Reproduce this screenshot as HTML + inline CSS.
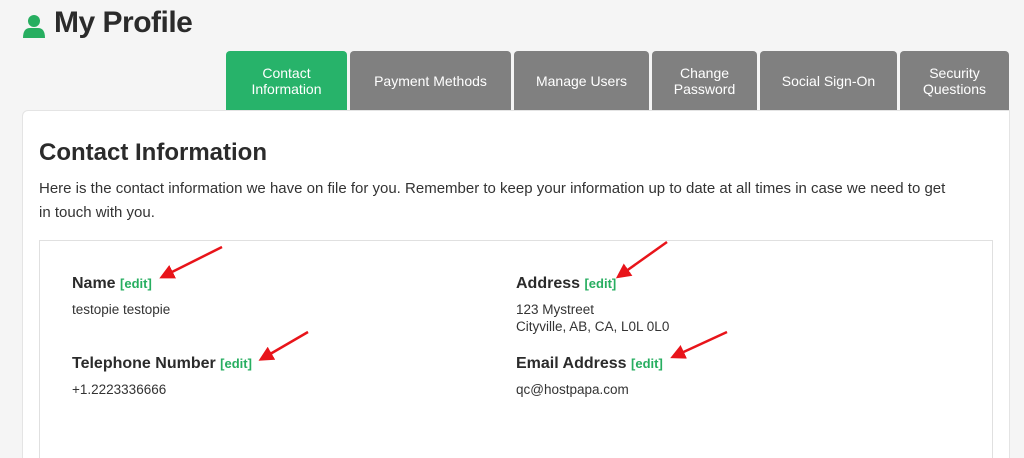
<!DOCTYPE html>
<html style="width:1024px;height:458px;overflow:hidden"><head><style>
body{margin:0;width:1024px;height:458px;background:#f5f5f5;font-family:"Liberation Sans",sans-serif;position:relative;overflow:hidden;color:#333}
h1{position:absolute;left:54px;top:6px;margin:0;font-size:30px;font-weight:bold;color:#2b2b2b;letter-spacing:-0.5px}
.tab{position:absolute;top:51px;height:59px;background:#808080;color:#fff;border-radius:4px 4px 0 0;display:flex;align-items:center;justify-content:center;text-align:center;font-size:14px;line-height:16px}
.panel{position:absolute;left:22px;top:110px;width:986px;height:348px;background:#fff;border-radius:6px 0 0 0;border:1px solid #e4e4e4;border-bottom:none}
h2{position:absolute;left:39px;top:139px;margin:0;font-size:24px;font-weight:bold;color:#2b2b2b}
.desc{position:absolute;left:39px;top:177px;width:980px;font-size:15px;line-height:24px;color:#333}
.box{position:absolute;left:39px;top:240px;width:952px;height:218px;border:1px solid #e0e0e0;border-bottom:none;background:#fff}
.lbl{position:absolute;font-size:16px;font-weight:bold;color:#2b2b2b}
.lbl span{font-size:13px;color:#27ae60;font-weight:bold}
.val{position:absolute;font-size:13.5px;line-height:17px;color:#333}
</style></head><body>
<svg style="position:absolute;left:22px;top:14px" width="24" height="26" viewBox="0 0 24 26"><circle cx="12" cy="7" r="6" fill="#27ae60"/><path d="M1 24 Q1 14 8 14 L16 14 Q23 14 23 24 Z" fill="#27ae60"/></svg>
<h1>My Profile</h1>
<div class="panel"></div>
<div class="tab" style="left:226px;width:121px;background:#27b36a">Contact<br>Information</div>
<div class="tab" style="left:350px;width:161px">Payment Methods</div>
<div class="tab" style="left:514px;width:135px">Manage Users</div>
<div class="tab" style="left:652px;width:105px">Change<br>Password</div>
<div class="tab" style="left:760px;width:137px">Social Sign-On</div>
<div class="tab" style="left:900px;width:109px">Security<br>Questions</div>
<h2>Contact Information</h2>
<div class="desc">Here is the contact information we have on file for you. Remember to keep your information up to date at all times in case we need to get<br>in touch with you.</div>
<div class="box"></div>
<div class="lbl" style="left:72px;top:275px">Name <span>[edit]</span></div>
<div class="val" style="left:72px;top:301px">testopie testopie</div>
<div class="lbl" style="left:72px;top:355px">Telephone Number <span>[edit]</span></div>
<div class="val" style="left:72px;top:381px">+1.2223336666</div>
<div class="lbl" style="left:516px;top:275px">Address <span>[edit]</span></div>
<div class="val" style="left:516px;top:301px">123 Mystreet<br>Cityville, AB, CA, L0L 0L0</div>
<div class="lbl" style="left:516px;top:355px">Email Address <span>[edit]</span></div>
<div class="val" style="left:516px;top:381px">qc@hostpapa.com</div>
<svg style="position:absolute;left:0;top:0" width="1024" height="458">
<defs><marker id="a" markerWidth="6" markerHeight="6" refX="3" refY="3" orient="auto"><path d="M0 0 L6 3 L0 6 Z" fill="#e8141a"/></marker></defs>
<g stroke="#e8141a" stroke-width="2.5" marker-end="url(#a)">
<line x1="222" y1="247" x2="166" y2="275"/>
<line x1="308" y1="332" x2="265" y2="357"/>
<line x1="667" y1="242" x2="622" y2="274"/>
<line x1="727" y1="332" x2="677" y2="355"/>
</g></svg>
</body></html>
